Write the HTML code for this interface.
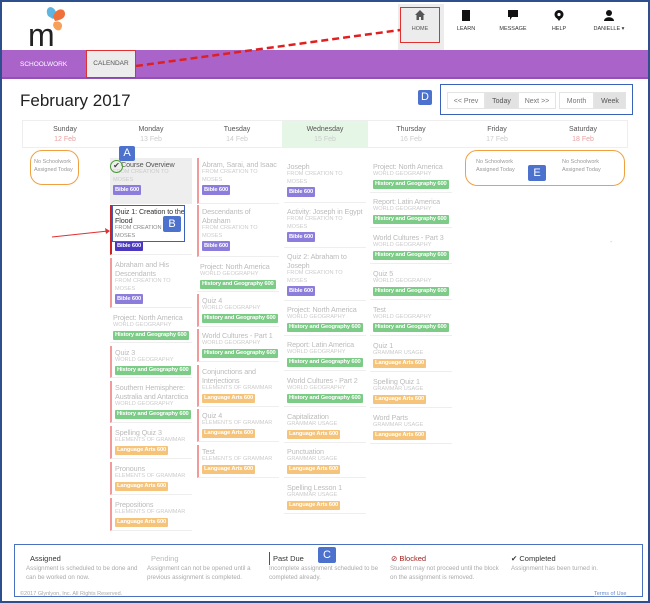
<!DOCTYPE html>
<html><head><meta charset="utf-8"><style>
*{box-sizing:border-box;margin:0;padding:0}
body{width:650px;height:603px;background:#fff;font-family:"Liberation Sans",sans-serif;position:relative;overflow:hidden}
.frame{position:absolute;left:0;top:0;width:650px;height:603px;border:2px solid #2d4f8e;z-index:50;pointer-events:none}
.a{position:absolute}
.nav{position:absolute;top:10px;width:40px;text-align:center;font-size:5.5px;color:#333}
.nav .ic{height:12px;margin-bottom:4px}
.c{position:absolute;width:82px;background:#fff;border-bottom:1px solid #eee;padding:2px 0 2px 3px;line-height:1;font-size:0;overflow:hidden}
.c.r{border-left:2px solid #f29a9a}
.t{font-size:7.2px;color:#bbb;line-height:9px;white-space:nowrap;letter-spacing:-.1px}
.s{font-size:5.6px;color:#ccc;line-height:7.5px;white-space:nowrap}
.b{display:table;font-size:5.8px;color:#fff;font-weight:bold;padding:1.5px 2px;border-radius:1px;line-height:6.5px;margin-top:1px;white-space:nowrap;letter-spacing:-.15px}
.bp{background:#8c7ddc}.bg{background:#7ccb86}.bo{background:#f5c47a}
.dh{position:absolute;top:121px;height:27px;text-align:center;font-size:7px;color:#555;line-height:10px;padding-top:4px}
.dh span{color:#ccc;display:block}
.btn{position:absolute;top:92px;height:17px;font-size:7px;color:#777;text-align:center;line-height:17px;border:1px solid #e4e4e4;background:#fff}
.lg{position:absolute;top:554px;font-size:6.2px;color:#aaa;line-height:9px}
.lg b{display:block;color:#333;font-weight:normal;font-size:7.5px;margin-bottom:1px}
.tag{position:absolute;background:#4c72cd;color:#fff;font-size:11px;text-align:center;border-radius:2px}
</style></head><body>
<div class="frame"></div>
<svg class="a" style="left:28px;top:4px" width="48" height="44" viewBox="0 0 48 44">
<path d="M20 12c-4-8 3-12 7-6 2 3 1 7-2 9z" fill="#5fb5e0"/>
<path d="M25 13c2-9 12-10 12-3 0 4-4 6-10 7z" fill="#f0703a"/>
<path d="M26 18c6-2 10 2 7 7-2 3-7 1-8-4z" fill="#f6a05a"/>
<text x="0" y="42" font-family="Liberation Sans" font-size="32" fill="#222">m</text>
</svg>
<div class="a" style="left:398px;top:4px;width:46px;height:46px;background:#ececec"></div>
<div class="a" style="left:400px;top:7px;width:40px;height:36px;border:1.5px solid #e03030"></div>
<div class="nav" style="left:400px;color:#555"><div class="ic"><svg width="10" height="10" viewBox="0 0 10 10"><path d="M5 0L0 5h1.5v5h2.5V7h2v3h2.5V5H10z" fill="#555"/></svg></div>HOME</div>
<div class="nav" style="left:446px"><div class="ic"><svg width="8" height="11"><rect width="8" height="11" fill="#111"/></svg></div>LEARN</div>
<div class="nav" style="left:493px"><div class="ic"><svg width="10" height="10"><path d="M0 0h10v7H4L2 10V7H0z" fill="#111"/></svg></div>MESSAGE</div>
<div class="nav" style="left:539px"><div class="ic"><svg width="10" height="11"><circle cx="5" cy="4.5" r="4.5" fill="#111"/><path d="M2 7l3 4 3-4z" fill="#111"/><circle cx="5" cy="4.5" r="1.6" fill="#fff"/></svg></div>HELP</div>
<div class="nav" style="left:585px;width:48px"><div class="ic"><svg width="10" height="11"><circle cx="5" cy="3" r="3" fill="#111"/><path d="M0 11c0-5 10-5 10 0z" fill="#111"/></svg></div>DANIELLE ▾</div>
<div class="a" style="left:0;top:50px;width:650px;height:29px;background:#a963c9"></div>
<div class="a" style="left:0;top:77px;width:650px;height:2px;background:#9350b5"></div>
<div class="a" style="left:20px;top:61px;font-size:6.5px;color:#fff">SCHOOLWORK</div>
<div class="a" style="left:86px;top:50px;width:50px;height:28px;background:#ececec;border:1.5px solid #e03030;font-size:6.5px;color:#555;text-align:center;line-height:26px">CALENDAR</div>
<svg class="a" style="left:0;top:0" width="650" height="80"><line x1="136" y1="66" x2="400" y2="30" stroke="#e02020" stroke-width="2.5" stroke-dasharray="7,4"/></svg>
<div class="a" style="left:20px;top:91px;font-size:17px;color:#222">February 2017</div>
<div class="tag" style="left:418px;top:90px;width:14px;height:15px;line-height:15px">D</div>
<div class="a" style="left:440px;top:84px;width:193px;height:31px;border:1.5px solid #3a62b8"></div>
<div class="btn" style="left:447px;width:38px">&lt;&lt; Prev</div>
<div class="btn" style="left:485px;width:33px;background:#e2e2e2;color:#555">Today</div>
<div class="btn" style="left:518px;width:38px">Next &gt;&gt;</div>
<div class="btn" style="left:559px;width:35px">Month</div>
<div class="btn" style="left:594px;width:32px;background:#e2e2e2;color:#555">Week</div>
<div class="a" style="left:22px;top:120px;width:606px;height:28px;border:1px solid #eee"></div>
<div class="a" style="left:282px;top:121px;width:86px;height:26px;background:#e6f6e6"></div>
<div class="dh" style="left:22px;width:86px">Sunday<span style="color:#e8a0a0">12 Feb</span></div>
<div class="dh" style="left:108px;width:86px">Monday<span>13 Feb</span></div>
<div class="dh" style="left:194px;width:86px">Tuesday<span>14 Feb</span></div>
<div class="dh" style="left:282px;width:86px">Wednesday<span>15 Feb</span></div>
<div class="dh" style="left:368px;width:86px">Thursday<span>16 Feb</span></div>
<div class="dh" style="left:454px;width:86px">Friday<span>17 Feb</span></div>
<div class="dh" style="left:540px;width:86px">Saturday<span style="color:#e8a0a0">18 Feb</span></div>
<div class="a" style="left:30px;top:150px;width:49px;height:35px;border:1.5px solid #f0a040;border-radius:12px"></div>
<div class="a" style="left:34px;top:158px;font-size:5.5px;color:#999;line-height:8px">No Schoolwork<br>Assigned Today</div>
<div class="a" style="left:465px;top:150px;width:160px;height:36px;border:1.5px solid #f0a040;border-radius:12px"></div>
<div class="a" style="left:476px;top:158px;font-size:5.5px;color:#999;line-height:8px">No Schoolwork<br>Assigned Today</div>
<div class="a" style="left:562px;top:158px;font-size:5.5px;color:#999;line-height:8px">No Schoolwork<br>Assigned Today</div>
<div class="tag" style="left:528px;top:165px;width:18px;height:16px;line-height:16px">E</div>
<div class="a" style="left:610px;top:239px;font-size:7px;color:#bbb">-</div>

<div class="c" style="left:110px;top:158px;height:46px;background:#eee"><div class="t" style="color:#555;padding-left:8px">Course Overview</div><div class="s">FROM CREATION TO<br>MOSES</div><div class="b bp">Bible 600</div></div>
<div class="a" style="left:110px;top:160px;width:13px;height:13px;border:1.5px solid #4a9a3a;border-radius:50%;font-size:8px;color:#444;text-align:center;line-height:10px">✔</div>
<div class="tag" style="left:119px;top:146px;width:16px;height:15px;line-height:15px">A</div>
<div class="c r" style="left:110px;top:205px;height:50px;border-left-color:#d02020"><div class="t" style="color:#333">Quiz 1: Creation to the<br>Flood</div><div class="s" style="color:#888">FROM CREATION TO<br>MOSES</div><div class="b bp" style="background:#4a38c0">Bible 600</div></div>
<div class="a" style="left:112px;top:205px;width:73px;height:37px;border:1.5px solid #3a62b8"></div>
<div class="tag" style="left:163px;top:216px;width:18px;height:16px;line-height:16px">B</div>
<svg class="a" style="left:50px;top:225px" width="62" height="15"><line x1="2" y1="12" x2="58" y2="6" stroke="#e03030" stroke-width="1"/><path d="M60 6l-5-3 1 6z" fill="#e03030"/></svg>
<div class="c r" style="left:110px;top:258px;height:50px"><div class="t">Abraham and His<br>Descendants</div><div class="s">FROM CREATION TO<br>MOSES</div><div class="b bp">Bible 600</div></div>
<div class="c" style="left:110px;top:311px;height:32px"><div class="t">Project: North America</div><div class="s">WORLD GEOGRAPHY</div><div class="b bg">History and Geography 600</div></div>
<div class="c r" style="left:110px;top:346px;height:32px"><div class="t">Quiz 3</div><div class="s">WORLD GEOGRAPHY</div><div class="b bg">History and Geography 600</div></div>
<div class="c r" style="left:110px;top:381px;height:42px"><div class="t">Southern Hemisphere:<br>Australia and Antarctica</div><div class="s">WORLD GEOGRAPHY</div><div class="b bg">History and Geography 600</div></div>
<div class="c r" style="left:110px;top:426px;height:33px"><div class="t">Spelling Quiz 3</div><div class="s">ELEMENTS OF GRAMMAR</div><div class="b bo">Language Arts 600</div></div>
<div class="c r" style="left:110px;top:462px;height:33px"><div class="t">Pronouns</div><div class="s">ELEMENTS OF GRAMMAR</div><div class="b bo">Language Arts 600</div></div>
<div class="c r" style="left:110px;top:498px;height:33px"><div class="t">Prepositions</div><div class="s">ELEMENTS OF GRAMMAR</div><div class="b bo">Language Arts 600</div></div>

<div class="c r" style="left:197px;top:158px;height:46px"><div class="t">Abram, Sarai, and Isaac</div><div class="s">FROM CREATION TO<br>MOSES</div><div class="b bp">Bible 600</div></div>
<div class="c r" style="left:197px;top:205px;height:52px"><div class="t">Descendants of<br>Abraham</div><div class="s">FROM CREATION TO<br>MOSES</div><div class="b bp">Bible 600</div></div>
<div class="c" style="left:197px;top:260px;height:32px"><div class="t">Project: North America</div><div class="s">WORLD GEOGRAPHY</div><div class="b bg">History and Geography 600</div></div>
<div class="c r" style="left:197px;top:294px;height:33px"><div class="t">Quiz 4</div><div class="s">WORLD GEOGRAPHY</div><div class="b bg">History and Geography 600</div></div>
<div class="c r" style="left:197px;top:329px;height:33px"><div class="t">World Cultures - Part 1</div><div class="s">WORLD GEOGRAPHY</div><div class="b bg">History and Geography 600</div></div>
<div class="c r" style="left:197px;top:365px;height:42px"><div class="t">Conjunctions and<br>Interjections</div><div class="s">ELEMENTS OF GRAMMAR</div><div class="b bo">Language Arts 600</div></div>
<div class="c r" style="left:197px;top:409px;height:33px"><div class="t">Quiz 4</div><div class="s">ELEMENTS OF GRAMMAR</div><div class="b bo">Language Arts 600</div></div>
<div class="c r" style="left:197px;top:445px;height:33px"><div class="t">Test</div><div class="s">ELEMENTS OF GRAMMAR</div><div class="b bo">Language Arts 600</div></div>

<div class="c" style="left:284px;top:160px;height:43px"><div class="t">Joseph</div><div class="s">FROM CREATION TO<br>MOSES</div><div class="b bp">Bible 600</div></div>
<div class="c" style="left:284px;top:205px;height:43px"><div class="t">Activity: Joseph in Egypt</div><div class="s">FROM CREATION TO<br>MOSES</div><div class="b bp">Bible 600</div></div>
<div class="c" style="left:284px;top:250px;height:51px"><div class="t">Quiz 2: Abraham to<br>Joseph</div><div class="s">FROM CREATION TO<br>MOSES</div><div class="b bp">Bible 600</div></div>
<div class="c" style="left:284px;top:303px;height:33px"><div class="t">Project: North America</div><div class="s">WORLD GEOGRAPHY</div><div class="b bg">History and Geography 600</div></div>
<div class="c" style="left:284px;top:338px;height:33px"><div class="t">Report: Latin America</div><div class="s">WORLD GEOGRAPHY</div><div class="b bg">History and Geography 600</div></div>
<div class="c" style="left:284px;top:374px;height:33px"><div class="t">World Cultures - Part 2</div><div class="s">WORLD GEOGRAPHY</div><div class="b bg">History and Geography 600</div></div>
<div class="c" style="left:284px;top:410px;height:33px"><div class="t">Capitalization</div><div class="s">GRAMMAR USAGE</div><div class="b bo">Language Arts 600</div></div>
<div class="c" style="left:284px;top:445px;height:33px"><div class="t">Punctuation</div><div class="s">GRAMMAR USAGE</div><div class="b bo">Language Arts 600</div></div>
<div class="c" style="left:284px;top:481px;height:33px"><div class="t">Spelling Lesson 1</div><div class="s">GRAMMAR USAGE</div><div class="b bo">Language Arts 600</div></div>

<div class="c" style="left:370px;top:160px;height:33px"><div class="t">Project: North America</div><div class="s">WORLD GEOGRAPHY</div><div class="b bg">History and Geography 600</div></div>
<div class="c" style="left:370px;top:195px;height:33px"><div class="t">Report: Latin America</div><div class="s">WORLD GEOGRAPHY</div><div class="b bg">History and Geography 600</div></div>
<div class="c" style="left:370px;top:231px;height:33px"><div class="t">World Cultures - Part 3</div><div class="s">WORLD GEOGRAPHY</div><div class="b bg">History and Geography 600</div></div>
<div class="c" style="left:370px;top:267px;height:33px"><div class="t">Quiz 5</div><div class="s">WORLD GEOGRAPHY</div><div class="b bg">History and Geography 600</div></div>
<div class="c" style="left:370px;top:303px;height:33px"><div class="t">Test</div><div class="s">WORLD GEOGRAPHY</div><div class="b bg">History and Geography 600</div></div>
<div class="c" style="left:370px;top:339px;height:33px"><div class="t">Quiz 1</div><div class="s">GRAMMAR USAGE</div><div class="b bo">Language Arts 600</div></div>
<div class="c" style="left:370px;top:375px;height:33px"><div class="t">Spelling Quiz 1</div><div class="s">GRAMMAR USAGE</div><div class="b bo">Language Arts 600</div></div>
<div class="c" style="left:370px;top:411px;height:33px"><div class="t">Word Parts</div><div class="s">GRAMMAR USAGE</div><div class="b bo">Language Arts 600</div></div>

<div class="a" style="left:14px;top:544px;width:629px;height:53px;border:1.5px solid #4a70c0"></div>
<div class="lg" style="left:26px;width:112px"><b style="padding-left:4px">Assigned</b>Assignment is scheduled to be done and can be worked on now.</div>
<div class="lg" style="left:147px;width:115px"><b style="color:#bbb;padding-left:4px">Pending</b>Assignment can not be opened until a previous assignment is completed.</div>
<div class="a" style="left:269px;top:552px;width:1px;height:13px;background:#d02020"></div>
<div class="lg" style="left:269px;width:115px"><b style="padding-left:4px">Past Due</b>Incomplete assignment scheduled to be completed already.</div>
<div class="tag" style="left:318px;top:547px;width:18px;height:16px;line-height:16px">C</div>
<div class="lg" style="left:390px;width:112px"><b style="color:#a02020;padding-left:1px">⊘ Blocked</b>Student may not proceed until the block on the assignment is removed.</div>
<div class="lg" style="left:511px;width:110px"><b>✔ Completed</b>Assignment has been turned in.</div>
<div class="a" style="left:20px;top:591px;font-size:5.5px;color:#aaa">©2017 Glynlyon, Inc. All Rights Reserved.</div>
<div class="a" style="left:594px;top:591px;font-size:5.5px;color:#6a8ac8;text-decoration:underline">Terms of Use</div>
</body></html>
